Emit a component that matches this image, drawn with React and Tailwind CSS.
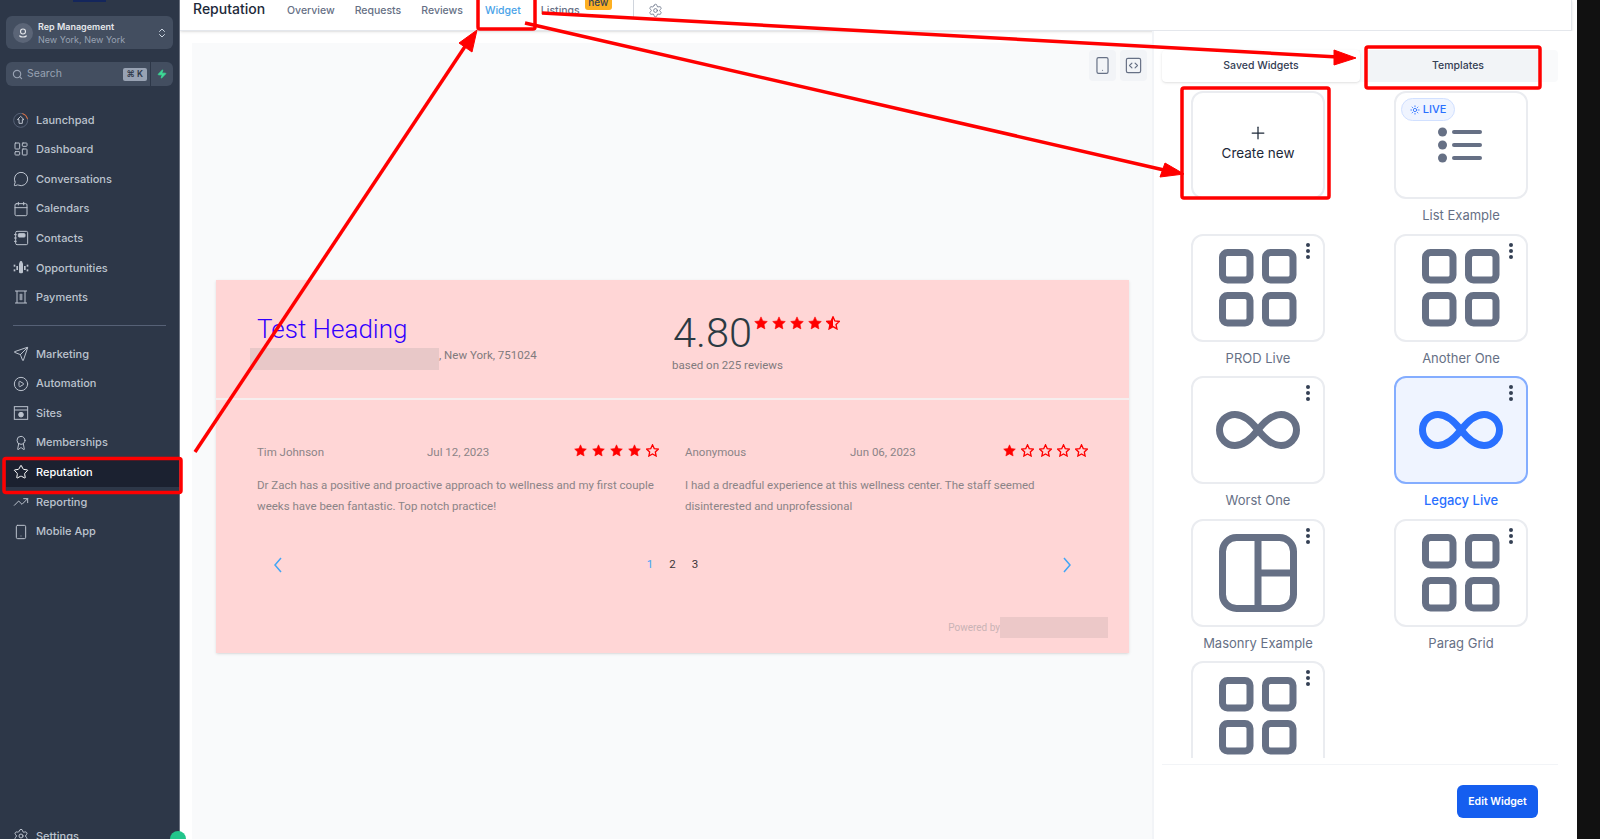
import React from 'react'
import { LayoutDashboard, MessageCircle, Calendar, Send, CirclePlay, Award, Star as StarLine, TrendingUp, Smartphone, Settings, Search, Zap, ChevronsUpDown, SquareCode, Plus, Sun } from 'lucide-react'

const LaunchIcon = (props) => (
  <svg viewBox="0 0 24 24" fill="none" stroke="currentColor" strokeWidth="1.3" {...props}>
    <circle cx="11.500" cy="12.500" r="10.500" stroke="#566176" />
    <path d="M14 2.300a10.500 10.500 0 0 1 7.800 8" stroke="#e8703a" />
    <path d="M11.500 6.500l5 5H14V17H9v-5.500H6.500z" />
  </svg>
)

const ContactIcon = (props) => (
  <svg viewBox="0 0 24 24" fill="none" stroke="currentColor" strokeWidth="1.500" {...props}>
    <rect x="4" y="2" width="18" height="20" rx="2" />
    <rect x="8" y="5.500" width="10" height="5" rx="1" fill="currentColor" />
    <path d="M1.500 7h4M1.500 12h4M1.500 17h4" />
  </svg>
)

const OppIcon = (props) => (
  <svg viewBox="0 0 24 24" fill="currentColor" {...props}>
    <rect x="9" y="4" width="6" height="16" rx="2" />
    <circle cx="12" cy="3.500" r="2" />
    <rect x="1" y="7" width="2.500" height="3" />
    <rect x="5" y="9" width="2.500" height="3" />
    <rect x="1" y="14" width="2.500" height="3" />
    <rect x="5" y="12" width="2.500" height="3" />
    <rect x="20.500" y="7" width="2.500" height="3" />
    <rect x="16.500" y="9" width="2.500" height="3" />
    <rect x="20.500" y="14" width="2.500" height="3" />
    <rect x="16.500" y="12" width="2.500" height="3" />
  </svg>
)

const PayIcon = (props) => (
  <svg viewBox="0 0 24 24" fill="none" stroke="currentColor" strokeWidth="1.500" {...props}>
    <path d="M3 3h18M3 21h18M6 3v18M18 3v18" />
    <path d="M9.500 9h5M9.500 12h5M9.500 15h5M12 7v10" strokeWidth="1.300" />
  </svg>
)

const SitesIcon = (props) => (
  <svg viewBox="0 0 24 24" fill="none" stroke="currentColor" strokeWidth="1.500" {...props}>
    <rect x="2" y="2.500" width="20" height="19" />
    <path d="M2 7.500h20" />
    <circle cx="12" cy="14.500" r="3.500" fill="currentColor" />
  </svg>
)

const topNav = [
  { label: 'Launchpad', Icon: LaunchIcon },
  { label: 'Dashboard', Icon: LayoutDashboard },
  { label: 'Conversations', Icon: MessageCircle },
  { label: 'Calendars', Icon: Calendar },
  { label: 'Contacts', Icon: ContactIcon },
  { label: 'Opportunities', Icon: OppIcon },
  { label: 'Payments', Icon: PayIcon },
]

const lowerNav = [
  { label: 'Marketing', Icon: Send },
  { label: 'Automation', Icon: CirclePlay },
  { label: 'Sites', Icon: SitesIcon },
  { label: 'Memberships', Icon: Award },
  { label: 'Reputation', Icon: StarLine, active: true },
  { label: 'Reporting', Icon: TrendingUp },
  { label: 'Mobile App', Icon: Smartphone },
]

const NavItem = ({ item }) => {
  const Icon = item.Icon
  return (
    <div className={item.active
      ? 'flex items-center h-[29.6px] ml-[6px] pl-[7px] gap-[7px] text-white bg-[#1b2130]'
      : 'flex items-center h-[29.6px] ml-[6px] pl-[7px] gap-[7px] text-[#bcc3ce]'}>
      <Icon className="w-4 h-4 shrink-0" strokeWidth={1.500} />
      <span className="text-[11px] font-medium">{item.label}</span>
    </div>
  )
}

const Sidebar = () => (
  <aside className="w-[180px] shrink-0 h-full flex flex-col overflow-hidden bg-[#2d3748] border-r border-[#6b7280] font-['Inter',sans-serif]">
    <div className="w-[33px] h-[2px] ml-[73px] bg-[#14265c]" />
    <div className="mx-[6px] mt-[14px] h-[33px] rounded-md bg-[#434e60] flex items-center pl-[7px] pr-[5px]">
      <div className="w-5 h-5 rounded-full bg-[#5b6577] flex items-center justify-center text-[#e5e7eb] text-[10px]">
        <svg viewBox="0 0 24 24" className="w-3 h-3" fill="none" stroke="currentColor" strokeWidth="2.200">
          <circle cx="12" cy="9" r="5" />
          <path d="M5 17c1 4 13 4 14 0" />
        </svg>
      </div>
      <div className="ml-[5px] flex-1 leading-[13px] pt-[1px]">
        <div className="text-[9px] font-semibold text-[#e5e7eb]">Rep Management</div>
        <div className="text-[9px] text-[#98a2b3]">New York, New York</div>
      </div>
      <ChevronsUpDown className="w-3 h-3 text-[#cbd5e1]" />
    </div>
    <div className="mx-[6px] mt-[13px] h-[24px] flex">
      <div className="flex-1 rounded-l-md bg-[#434e60] flex items-center pl-[6px] pr-[3px] text-[#98a2b3]">
        <Search className="w-[11px] h-[11px]" strokeWidth={2.500} />
        <span className="ml-[4px] text-[10.500px] flex-1">Search</span>
        <span className="bg-[#98a2b3] text-[#2d3748] text-[8.500px] font-semibold rounded-[2px] px-[4px] h-[13px] leading-[13px]">⌘ K</span>
      </div>
      <div className="w-[23px] rounded-r-md bg-[#434e60] border-l border-[#2d3748] flex items-center justify-center">
        <Zap className="w-[10px] h-[10px] text-[#3ddc97] fill-[#3ddc97]" />
      </div>
    </div>
    <nav className="mt-[19px]">
      {topNav.map((item) => <NavItem key={item.label} item={item} />)}
    </nav>
    <div className="mx-[13px] mt-[13px] mb-[13px] h-px bg-[#566176]" />
    <nav>
      {lowerNav.map((item) => <NavItem key={item.label} item={item} />)}
    </nav>
    <div className="mt-auto -mb-[12px] flex items-center h-[29.6px] ml-[6px] pl-[7px] gap-[7px] text-[#bcc3ce]">
      <Settings className="w-4 h-4" strokeWidth={1.500} />
      <span className="text-[11px] font-medium">Settings</span>
    </div>
  </aside>
)

const TopBar = () => (
  <header className="h-[31px] shrink-0 mr-[5px] flex items-start pl-[13px] bg-white border-b border-r border-[#e4e7ec] shadow-sm font-['Inter',sans-serif]">
    <span className="text-[14px] leading-[18px] font-medium text-[#1d2939] w-[94px] shrink-0">Reputation</span>
    <div className="flex gap-[20px] text-[10.500px] leading-[21px] font-medium text-[#667085]">
      <span>Overview</span>
      <span>Requests</span>
      <span>Reviews</span>
      <span className="ml-[2px] text-[#4aa3e8]">Widget</span>
      <span>Listings</span>
    </div>
    <span className="ml-[5px] -mt-[5px] h-[15px] w-[27px] rounded-[3px] bg-[#fdb022] text-[#344054] text-[10px] leading-[15px] font-medium text-center">new</span>
    <div className="ml-[21px] w-px h-[17px] bg-[#d0d5dd]" />
    <Settings className="ml-[14px] mt-[3px] w-[15px] h-[15px] text-[#667085]" strokeWidth={1.300} />
  </header>
)

const starPath = 'M12 1.500l3.200 7 7.600.9-5.600 5.200 1.500 7.500L12 18.300l-6.700 3.800 1.500-7.500L1.200 9.400l7.600-.9z'

const Star = ({ kind, size }) => (
  <svg viewBox="0 0 24 24" width={size} height={size} className="shrink-0">
    <defs>
      <clipPath id="half-star"><rect x="0" y="0" width="12" height="24" /></clipPath>
    </defs>
    <path d={starPath} fill={kind === 'full' ? '#ff0000' : 'none'} stroke="#ff0000" strokeWidth={kind === 'full' ? 1 : 2.400} />
    {kind === 'half' && <path d={starPath} fill="#ff0000" clipPath="url(#half-star)" />}
  </svg>
)

const Stars = ({ kinds, size = 14, gap = 'gap-[4px]' }) => (
  <div className={`flex ${gap}`}>
    {kinds.map((k, i) => <Star key={i} kind={k} size={size} />)}
  </div>
)

const Review = ({ name, date, kinds, nameClass, starClass, lines }) => (
  <div className="text-[11.500px] text-[#8b8487]">
    <div className="flex items-center h-[20px]">
      <span className={nameClass}>{name}</span>
      <span className={starClass}>{date}</span>
      <div className="mb-[6px] ml-[1px]">
        <Stars kinds={kinds} size={13} gap="gap-[5px]" />
      </div>
    </div>
    <div className="mt-[12px] leading-[20.500px]">
      {lines.map((line) => <div key={line} className="whitespace-nowrap">{line}</div>)}
    </div>
  </div>
)

const PageArrow = ({ d }) => (
  <svg viewBox="0 0 10 16" className="w-[10px] h-[16px]" fill="none" stroke="#42a5f5" strokeWidth="1.500">
    <path d={d} />
  </svg>
)

const WidgetPreview = () => (
  <div className="bg-[#ffd6d6] h-[373px] shadow-sm font-['Roboto',sans-serif]">
    <div className="h-[120px] flex pl-[41px] border-b-2 border-[#f6eeee]">
      <div className="w-[416px] pt-[29px]">
        <div className="text-[26px] leading-[40px] font-light text-[#3300ff]">Test Heading</div>
        <div className="flex items-start text-[11.500px] leading-[14px] text-[#7f7a7d] -ml-[7px] -mt-[1px]">
          <div className="w-[189px] h-[22px] bg-[#e8c8c8]" />
          <span>, New York, 751024</span>
        </div>
      </div>
      <div className="pt-[28px]">
        <div className="flex items-start">
          <span className="text-[41.500px] leading-[50px] font-light text-[#2b3a42]">4.80</span>
          <div className="mt-[8px] ml-[2px]">
            <Stars kinds={['full', 'full', 'full', 'full', 'half']} />
          </div>
        </div>
        <div className="text-[11.500px] leading-[14px] -ml-[1px] text-[#7f7a7d]">based on 225 reviews</div>
      </div>
    </div>
    <div className="grid grid-cols-[428px_1fr] pl-[41px] pt-[43px]">
      <Review name="Tim Johnson" date="Jul 12, 2023" kinds={['full', 'full', 'full', 'full', 'empty']}
        nameClass="w-[170px]" starClass="w-[146px]"
        lines={['Dr Zach has a positive and proactive approach to wellness and my first couple', 'weeks have been fantastic. Top notch practice!']} />
      <Review name="Anonymous" date="Jun 06, 2023" kinds={['full', 'empty', 'empty', 'empty', 'empty']}
        nameClass="w-[165px]" starClass="w-[152px]"
        lines={['I had a dreadful experience at this wellness center. The staff seemed', 'disinterested and unprofessional']} />
    </div>
    <div className="flex items-center justify-between mt-[39px] pl-[57px] pr-[57px] h-[20px]">
      <PageArrow d="M8 1L2 8L8 15" />
      <div className="flex gap-[16px] text-[11.500px] text-[#3b3538]">
        <span className="text-[#42a5f5]">1</span>
        <span>2</span>
        <span>3</span>
      </div>
      <PageArrow d="M2 1L8 8L2 15" />
    </div>
    <div className="flex items-center justify-end mt-[42px] pr-[21px] text-[10px] text-[#c9b3b5]">
      <span>Powered by</span>
      <div className="w-[108px] h-[21px] bg-[#ecc8c8]" />
    </div>
  </div>
)

const GridGlyph = ({ color = '#667085' }) => (
  <svg viewBox="0 0 78 78" className="w-[78px] h-[78px]" fill="none" stroke={color} strokeWidth="7">
    <rect x="3.500" y="3.500" width="27.500" height="27.500" rx="5" />
    <rect x="46.500" y="3.500" width="27.500" height="27.500" rx="5" />
    <rect x="3.500" y="46.500" width="27.500" height="27.500" rx="5" />
    <rect x="46.500" y="46.500" width="27.500" height="27.500" rx="5" />
  </svg>
)

const InfinityGlyph = ({ color = '#667085' }) => (
  <svg viewBox="0 0 84 38" className="w-[84px] h-[38px]" fill="none" stroke={color} strokeWidth="7">
    <path d="M42 19C35 10 28 3.500 19 3.500C10 3.500 3.500 10.500 3.500 19C3.500 27.500 10.500 34.500 19 34.500C28 34.500 35 28 42 19C49 10 56 3.500 65 3.500C73.500 3.500 80.500 10.500 80.500 19C80.500 27.500 73.500 34.500 65 34.500C56 34.500 49 28 42 19Z" />
  </svg>
)

const MasonryGlyph = () => (
  <svg viewBox="0 0 78 78" className="w-[78px] h-[78px]" fill="none" stroke="#667085" strokeWidth="7">
    <rect x="3.500" y="3.500" width="71" height="71" rx="14" />
    <path d="M39 3.500v71M39 39h35.500" />
  </svg>
)

const ListGlyph = () => (
  <svg viewBox="0 0 44 36" className="w-[44px] h-[36px]" fill="#667085">
    <circle cx="4.500" cy="5" r="4.500" />
    <circle cx="4.500" cy="18" r="4.500" />
    <circle cx="4.500" cy="31" r="4.500" />
    <rect x="14" y="3" width="30" height="4" rx="2" />
    <rect x="14" y="16" width="30" height="4" rx="2" />
    <rect x="14" y="29" width="30" height="4" rx="2" />
  </svg>
)

const Dots = () => (
  <div className="absolute top-[7px] right-[13px] flex flex-col gap-[2px]">
    <span className="w-1 h-1 rounded-full bg-[#344054]" />
    <span className="w-1 h-1 rounded-full bg-[#344054]" />
    <span className="w-1 h-1 rounded-full bg-[#344054]" />
  </div>
)

const TemplateCard = ({ label, glyph, selected, dots = true, cut, children }) => (
  <div className="flex flex-col items-center">
    <div className={
      (selected ? 'border-[#84adff] bg-[#eff4ff] ' : 'border-[#eaecf0] bg-white ') +
      (cut ? 'border-b-0 rounded-t-xl ' : 'rounded-xl ') +
      'relative w-[134px] h-[108px] shrink-0 border-2 flex items-center justify-center'
    }>
      {dots && <Dots />}
      {glyph}
      {children}
    </div>
    {label && <div className={selected
      ? 'mt-[7px] text-[13px] leading-[18px] font-medium text-[#2970ff]'
      : 'mt-[7px] text-[13px] leading-[18px] text-[#667085]'}>{label}</div>}
  </div>
)

const RightPanel = () => (
  <section className="w-[425px] shrink-0 h-full flex flex-col border-l-2 border-[#f2f4f7] bg-white font-['Inter',sans-serif]">
    <div className="mt-[19px] ml-[8px] mr-[19px] h-[32px] shrink-0 grid grid-cols-2 rounded bg-[#f9fafb] text-[10.500px] font-medium">
      <div className="bg-white rounded shadow-sm flex items-center justify-center text-[#344054]">Saved Widgets</div>
      <div className="bg-[#f2f4f7] flex items-center justify-center text-[#344054] mr-[20px] ml-[5px] pl-[13px]">Templates</div>
    </div>
    <div className="mt-[9px] h-[667px] shrink-0 overflow-hidden pl-[37px] grid grid-cols-[134px_134px] gap-x-[69px] auto-rows-[142.500px]">
      <TemplateCard dots={false}>
        <div className="flex flex-col items-center -mt-[4px] text-[#1d2939]">
          <Plus className="w-5 h-5" strokeWidth={1.500} />
          <span className="text-[13.500px] leading-[20px]">Create new</span>
        </div>
      </TemplateCard>
      <TemplateCard label="List Example" dots={false}>
        <div className="absolute top-[5px] left-[5px] h-[23px] w-[54px] rounded-full bg-[#eff4ff] border border-[#d1e0ff] text-[#2970ff] text-[11px] font-medium flex items-center justify-center gap-[3px]">
          <Sun className="w-[10px] h-[10px]" />LIVE
        </div>
        <div className="-ml-[3px]"><ListGlyph /></div>
      </TemplateCard>
      <TemplateCard label="PROD Live" glyph={<GridGlyph />} />
      <TemplateCard label="Another One" glyph={<GridGlyph />} />
      <TemplateCard label="Worst One" glyph={<InfinityGlyph />} />
      <TemplateCard label="Legacy Live" selected glyph={<InfinityGlyph color="#2970ff" />} />
      <TemplateCard label="Masonry Example" glyph={<MasonryGlyph />} />
      <TemplateCard label="Parag Grid" glyph={<GridGlyph />} />
      <TemplateCard cut glyph={<GridGlyph />} />
    </div>
    <div className="mt-[6px] ml-[8px] mr-[19px] h-px bg-[#f2f4f7] shrink-0" />
    <div className="flex justify-end pr-[39px] pt-[20px]">
      <button className="w-[81px] h-[33px] rounded-md bg-[#155eef] text-white text-[10.500px] font-semibold">Edit Widget</button>
    </div>
  </section>
)

const Canvas = () => (
  <section className="flex-1 min-w-0 ml-[12px] mt-[12px] bg-[#f9fafb] relative">
    <div className="absolute top-[7px] right-[5px] flex gap-[4px] text-[#667085]">
      <div className="w-[27px] h-[31px] rounded bg-[#f2f4f7] flex items-center justify-center">
        <Smartphone className="w-[19px] h-[21px]" strokeWidth={1.500} />
      </div>
      <div className="w-[27px] h-[31px] rounded bg-[#f2f4f7] flex items-center justify-center">
        <SquareCode className="w-[19px] h-[19px]" strokeWidth={1.500} />
      </div>
    </div>
    <div className="pt-[237px] pl-[24px] pr-[23px]">
      <WidgetPreview />
    </div>
  </section>
)

// red annotations drawn on top of the screenshot
const Annotations = () => (
  <svg className="absolute inset-0 pointer-events-none" width="1600" height="839" fill="none" stroke="#ff0000">
    <rect x="4" y="458.500" width="177" height="34" rx="2" strokeWidth="3.500" />
    <rect x="478" y="-3" width="57" height="32" rx="2" strokeWidth="3.500" />
    <rect x="1366" y="47" width="174" height="41" rx="2" strokeWidth="3.500" />
    <rect x="1182" y="88" width="147" height="110" rx="2" strokeWidth="3.500" />
    <path d="M195 452L468 42" strokeWidth="3.500" />
    <path d="M477 30L459 43L472 52Z" fill="#ff0000" strokeWidth="1" />
    <path d="M525 23L1164 170" strokeWidth="3.500" />
    <path d="M1184 174L1165 163L1160 177Z" fill="#ff0000" strokeWidth="1" />
    <path d="M542 13L1338 57" strokeWidth="3.500" />
    <path d="M1356 58L1334 50L1334 65Z" fill="#ff0000" strokeWidth="1" />
  </svg>
)

const App = () => (
  <div className="relative w-[1600px] h-[839px] overflow-hidden flex bg-[#111111]">
    <Sidebar />
    <main className="w-[1397px] shrink-0 h-full flex flex-col bg-white overflow-hidden">
      <TopBar />
      <div className="flex-1 min-h-0 flex">
        <Canvas />
        <RightPanel />
      </div>
    </main>
    <div className="absolute left-[170px] top-[831px] w-4 h-4 rounded-full bg-[#22c58b]" />
    <Annotations />
  </div>
)

export default App
